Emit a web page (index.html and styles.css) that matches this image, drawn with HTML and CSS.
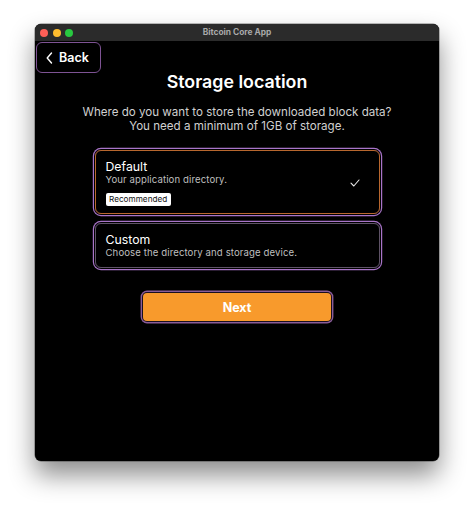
FILE: index.html
```html
<!DOCTYPE html>
<html>
<head>
<meta charset="utf-8">
<link rel="stylesheet" href="styles.css">
</head>
<body>
<div class="window">
  <div class="titlebar">
    <div class="lights">
      <span class="light red"></span>
      <span class="light yellow"></span>
      <span class="light green"></span>
    </div>
    <div class="wintitle">Bitcoin Core App</div>
  </div>
  <div class="content">
    <button class="back">
      <svg class="chev" width="7" height="12" viewBox="0 0 7 12"><path d="M5.5 1 L1.2 6 L5.5 11" fill="none" stroke="#fff" stroke-width="1.4" stroke-linecap="round" stroke-linejoin="round"/></svg>
      <span>Back</span>
    </button>
    <h1 class="title">Storage location</h1>
    <p class="subtitle">Where do you want to store the downloaded block data?<br>You need a minimum of 1GB of storage.</p>
    <div class="option selected">
      <div class="opt-text">
        <div class="opt-name">Default</div>
        <div class="opt-desc">Your application directory.</div>
        <span class="badge">Recommended</span>
      </div>
      <svg class="check" width="10" height="8" viewBox="0 0 10 8"><path d="M1 4.2 L3.8 7 L9 1" fill="none" stroke="#e8e8e8" stroke-width="1.1" stroke-linecap="round" stroke-linejoin="round"/></svg>
    </div>
    <div class="option">
      <div class="opt-text">
        <div class="opt-name">Custom</div>
        <div class="opt-desc">Choose the directory and storage device.</div>
      </div>
    </div>
    <button class="next">Next</button>
  </div>
</div>
</body>
</html>
```
FILE: styles.css
```css
* { box-sizing: border-box; }
html, body { margin: 0; padding: 0; background: #ffffff; }
body {
  font-family: Inter, "Noto Sans", "Liberation Sans", sans-serif;
  padding: 24px 0 0 35px;
  height: 507px;
  overflow: hidden;
}
.window {
  width: 404px;
  height: 437px;
  border-radius: 6px;
  overflow: hidden;
  background: #000;
  box-shadow: 0 14px 26px rgba(0,0,0,0.45), 0 0 0 0.5px rgba(0,0,0,0.5);
  display: flex;
  flex-direction: column;
}
.titlebar {
  height: 17px;
  background: #2b2b2b;
  display: flex;
  align-items: center;
  position: relative;
  flex: none;
}
.lights { display: flex; gap: 4.6px; padding-left: 5px; }
.light { width: 8px; height: 8px; border-radius: 50%; display: block; }
.red { background: #fe5f57; }
.yellow { background: #febc2e; }
.green { background: #28c840; }
.wintitle {
  position: absolute;
  left: 0; right: 0; top: 0;
  line-height: 17px;
  text-align: center;
  font-size: 8.4px;
  font-weight: 700;
  color: #a9a9a9;
}
.content {
  flex: 1;
  display: flex;
  flex-direction: column;
  align-items: center;
}
.back {
  align-self: flex-start;
  margin: 1px 0 0 1px;
  width: 65px;
  height: 31px;
  background: #000;
  border: 1.3px solid #7e5394;
  border-radius: 6px;
  display: flex;
  align-items: center;
  gap: 6px;
  padding: 0 0 0 9px;
  color: #fff;
  font-family: inherit;
  font-size: 12.5px;
  font-weight: 600;
}
.chev { display: block; }
.title {
  margin: -1px 0 0 0;
  font-size: 17.8px;
  line-height: 20px;
  font-weight: 600;
  color: #fff;
}
.subtitle {
  margin: 13px 0 0 0;
  font-size: 11.6px;
  line-height: 14px;
  color: #d0d0d0;
  text-align: center;
}
.option {
  width: 285px;
  border: 1px solid #5e5266;
  border-radius: 6px;
  box-shadow: 0 0 0 1px #000, 0 0 0 2.2px #a874c8;
  display: flex;
  align-items: center;
  justify-content: space-between;
  padding: 8px 19px 8px 10px;
  margin-top: 9px;
}
.option.selected {
  margin-top: 17px;
  border-color: #b8672e;
  padding-bottom: 7px;
}
.opt-name {
  font-size: 12.3px;
  line-height: 15px;
  color: #fff;
}
.opt-desc {
  font-size: 9.6px;
  line-height: 12px;
  color: #bfbfbf;
  letter-spacing: 0.1px;
}
.badge {
  display: inline-block;
  margin-top: 3px;
  background: #fff;
  color: #111;
  font-size: 8.2px;
  line-height: 13px;
  height: 13px;
  padding: 0 3.5px;
  border-radius: 2px;
}
.check { display: block; }
.next {
  margin-top: 25px;
  width: 188px;
  height: 28px;
  background: #f89a2c;
  border: none;
  border-radius: 4px;
  box-shadow: 0 0 0 1px #1a0f1e, 0 0 0 2.4px #8a5c98;
  color: #fff;
  font-family: inherit;
  font-size: 12.5px;
  font-weight: 700;
}
```
